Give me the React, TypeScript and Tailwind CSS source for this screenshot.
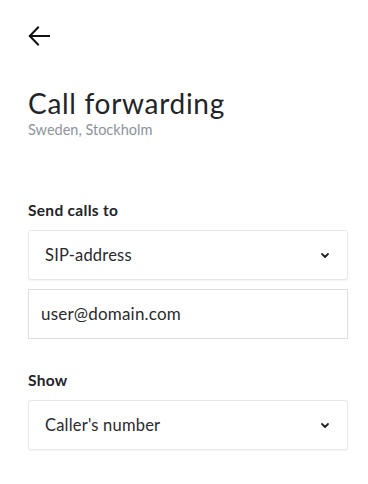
import React from 'react';

const Chevron = () => (
  <svg width="10" height="7" viewBox="0 0 10 7" fill="none">
    <path d="M2 2l3 3 3-3" stroke="#222" strokeWidth="1.8" strokeLinecap="round" strokeLinejoin="round" />
  </svg>
);

const SelectBox = ({ value }: { value: string }) => (
  <div className="flex h-[50px] items-center justify-between rounded-[3px] border border-[#e8e8e8] bg-white pl-[16px] pr-[17px] shadow-[0_1px_2px_rgba(0,0,0,0.05)]">
    <span className="text-[16.5px] tracking-[0.2px] text-[#2a2a2e]">{value}</span>
    <Chevron />
  </div>
);

export default function App() {
  return (
    <div className="min-h-[484px] w-full bg-white pl-[28px] pr-[20px] pt-[26px] font-['Lato',sans-serif]">
      <button className="block">
        <svg width="22" height="20" viewBox="0 0 22 20" fill="none">
          <path d="M21 10H2M10 1.5L1.8 10l8.2 8.5" stroke="#111" strokeWidth="2" strokeLinecap="square" />
        </svg>
      </button>

      <h1 className="mt-[40px] text-[28px] leading-[34px] tracking-[0.7px] text-[#222428]">Call forwarding</h1>
      <p className="mt-[1px] text-[14.5px] leading-[18px] text-[#8d939b]">Sweden, Stockholm</p>

      <div className="mt-[62px] text-[15.5px] font-bold leading-[18px] tracking-[0.3px] text-[#222428]">Send calls to</div>
      <div className="mt-[11px] flex flex-col gap-[9px]">
        <SelectBox value="SIP-address" />
        <div className="flex h-[50px] items-center border border-[#dedede] bg-white px-[12px]">
          <span className="text-[17px] tracking-[0.2px] text-[#2a2a2e]">user@domain.com</span>
        </div>
      </div>

      <div className="mt-[32px] text-[15.5px] font-bold leading-[18px] tracking-[0.3px] text-[#222428]">Show</div>
      <div className="mt-[11px]">
        <SelectBox value="Caller's number" />
      </div>
    </div>
  );
}
